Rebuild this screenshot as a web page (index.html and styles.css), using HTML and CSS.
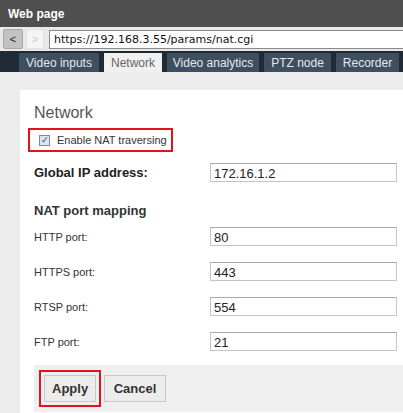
FILE: index.html
```html
<!DOCTYPE html>
<html lang="en">
<head>
    <meta charset="UTF-8">
    <meta name="viewport" content="width=device-width, initial-scale=1.0">
    <title>Web page</title>
    <link rel="stylesheet" href="styles.css">
</head>
<body>
    <div class="titlebar">Web page</div>

    <div class="addressbar">
        <span class="nav-btn back">&lt;</span>
        <span class="nav-btn fwd">&gt;</span>
        <div class="url">https://192.168.3.55/params/nat.cgi</div>
    </div>

    <div class="tabs">
        <span class="tab">Video inputs</span>
        <span class="tab active">Network</span>
        <span class="tab">Video analytics</span>
        <span class="tab">PTZ node</span>
        <span class="tab">Recorder</span>
    </div>

    <div class="page">
        <div class="panel">
            <h1 class="heading">Network</h1>

            <label class="check highlight">
                <span class="box">&#10003;</span>
                Enable NAT traversing
            </label>

            <div class="row main">
                <span class="label">Global IP address:</span>
                <div class="field">172.16.1.2</div>
            </div>

            <h2 class="sub">NAT port mapping</h2>

            <div class="row">
                <span class="label">HTTP port:</span>
                <div class="field">80</div>
            </div>
            <div class="row">
                <span class="label">HTTPS port:</span>
                <div class="field">443</div>
            </div>
            <div class="row">
                <span class="label">RTSP port:</span>
                <div class="field">554</div>
            </div>
            <div class="row">
                <span class="label">FTP port:</span>
                <div class="field">21</div>
            </div>

            <div class="buttons">
                <span class="btn-wrap"><span class="btn">Apply</span></span>
                <span class="btn">Cancel</span>
            </div>
        </div>
    </div>
</body>
</html>
```

FILE: styles.css
```css
body {
    margin: 0;
    width: 403px;
    height: 413px;
    overflow: hidden;
    font-family: "Liberation Sans", Arial, sans-serif;
    background-color: #ececec;
}
.titlebar {
    height: 27px;
    line-height: 28px;
    padding-left: 8px;
    background-color: #4f4f4f;
    color: #fff;
    font-weight: bold;
    font-size: 12px;
}
.addressbar {
    display: flex;
    align-items: center;
    height: 24px;
    padding-left: 3px;
    background-color: #e9e9e9;
}
.nav-btn {
    width: 18px;
    height: 18px;
    margin-right: 3px;
    display: flex;
    justify-content: center;
    align-items: center;
    font-size: 11px;
    border-radius: 2px;
}
.back {
    background-color: #c2c2c2;
    border: 1px solid #a8a8a8;
    color: #222;
}
.fwd {
    width: 16px;
    background-color: #f4f4f4;
    border: 1px solid #e2e2e2;
    color: #ccc;
    margin-right: 5px;
}
.url {
    flex: 1;
    height: 17px;
    line-height: 17px;
    padding-left: 4px;
    background-color: #fff;
    border: 1px solid #8a8a8a;
    border-right: none;
    font-family: "DejaVu Sans", sans-serif;
    font-size: 11px;
    color: #111;
}
.tabs {
    display: flex;
    gap: 5px;
    height: 19px;
    padding: 2px 0 0 19px;
    background-color: #1f2a35;
}
.tab {
    box-sizing: border-box;
    flex-shrink: 0;
    white-space: nowrap;
    text-align: center;
    line-height: 20px;
    font-size: 12px;
    color: #e4e8ec;
    background-color: #3e4f60;
}
.tabs .tab:nth-child(1) { width: 80px; }
.tabs .tab:nth-child(2) { width: 58px; }
.tabs .tab:nth-child(3) { width: 92px; }
.tabs .tab:nth-child(4) { width: 67px; }
.tabs .tab:nth-child(5) { width: 63px; }
.tab.active {
    background-color: #f0f0f0;
    color: #666;
}
.page {
    padding: 18px 0 0 20px;
}
.panel {
    background-color: #fff;
    padding: 12px 0 10px 14px;
    height: 320px;
}
.heading {
    margin: 0 0 5px 0;
    font-size: 16px;
    line-height: 21px;
    font-weight: normal;
    color: #555;
}
.check {
    display: inline-flex;
    align-items: center;
    gap: 7px;
    font-size: 11px;
    color: #333;
}
.highlight {
    margin-left: -6px;
    padding: 3px 4px 3px 9px;
    border: 2px solid #e0141e;
    height: 14px;
}
.box {
    width: 9px;
    height: 9px;
    border: 1px solid #7d8ba0;
    background-color: #dde4f0;
    color: #23407a;
    font-size: 9px;
    line-height: 9px;
    text-align: center;
}
.row {
    display: flex;
    align-items: center;
    height: 19px;
    margin-bottom: 16px;
}
.row.main {
    margin-top: 11px;
    margin-bottom: 21px;
}
.label {
    width: 176px;
    font-size: 11px;
    color: #333;
}
.row.main .label {
    font-size: 13px;
    font-weight: bold;
    color: #222;
}
.field {
    width: 182px;
    height: 17px;
    line-height: 19px;
    padding-left: 3px;
    border: 1px solid #c4c4c4;
    border-top-color: #a9a9a9;
    font-size: 13px;
    color: #222;
}
.sub {
    margin: 0 0 9px 0;
    font-size: 13px;
    font-weight: bold;
    color: #333;
}
.buttons {
    display: flex;
    align-items: center;
    gap: 3px;
    height: 47px;
    margin-top: -2px;
    padding-left: 5px;
    background-color: #efefef;
}
.btn-wrap {
    border: 2px solid #e0141e;
    padding: 3px;
}
.btn {
    display: inline-block;
    height: 25px;
    line-height: 25px;
    padding: 0 7px;
    border: 1px solid #c8c8c8;
    background-color: #ececec;
    font-size: 13px;
    font-weight: bold;
    color: #333;
}
.btn-wrap .btn {
    width: 36px;
    text-align: center;
}
.buttons > .btn {
    width: 46px;
    text-align: center;
}
```
